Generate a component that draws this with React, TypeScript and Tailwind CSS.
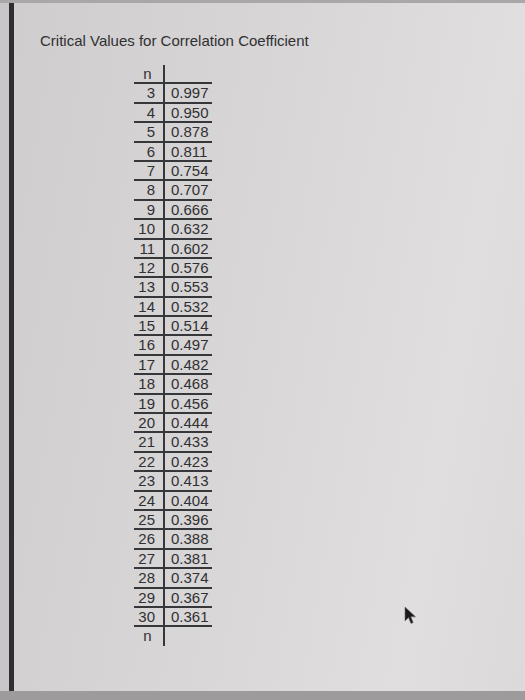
const ROWS: [number, string][] = [
  [3, '0.997'], [4, '0.950'], [5, '0.878'], [6, '0.811'], [7, '0.754'],
  [8, '0.707'], [9, '0.666'], [10, '0.632'], [11, '0.602'], [12, '0.576'],
  [13, '0.553'], [14, '0.532'], [15, '0.514'], [16, '0.497'], [17, '0.482'],
  [18, '0.468'], [19, '0.456'], [20, '0.444'], [21, '0.433'], [22, '0.423'],
  [23, '0.413'], [24, '0.404'], [25, '0.396'], [26, '0.388'], [27, '0.381'],
  [28, '0.374'], [29, '0.367'], [30, '0.361'],
]

function Cursor() {
  return (
    <svg className="absolute left-[404px] top-[606px] blur-[0.6px]" width="14" height="20" viewBox="0 0 14 20">
      <path d="M1 1 L1 15 L4.5 11.5 L7 17.5 L9.2 16.5 L6.8 10.8 L11.5 10.8 Z" fill="#1a1a1c" stroke="#6b6a6c" strokeWidth="0.6" />
    </svg>
  )
}

export default function App() {
  return (
    <div className="relative flex h-[700px] w-[525px] flex-col overflow-hidden bg-[#cfcdce] font-['Liberation_Sans',Arial,sans-serif] text-[#303032]">
      <div className="h-[3px] bg-[#a9a7a8]" />
      <div className="flex flex-1">
        <div className="w-[9px] bg-[#c8c6c7]" />
        <div className="w-[5px] bg-[#2e2e33]" />
        <div className="flex-1 bg-[linear-gradient(100deg,#cfcdce_0%,#d8d6d7_45%,#e0dedf_80%,#dbd9da_100%)] pl-[26px] pt-[29px]">
          <h1 className="text-[15px] leading-[18px]">Critical Values for Correlation Coefficient</h1>

          {/* table */}
          <div className="ml-[94px] mt-[15px] w-[78px] text-[15px] leading-[17.4px]">
            <div className="flex h-[19.4px] border-b-2 border-[#35373a]">
              <div className="w-[31px] border-r-2 border-[#35373a] pr-[2px] text-center">n</div>
              <div className="flex-1" />
            </div>
            {ROWS.map(([n, r]) => (
              <div key={n} className="flex h-[19.4px] border-b-2 border-[#35373a]">
                <div className="w-[31px] border-r-2 border-[#35373a] pr-[8px] text-right">{n}</div>
                <div className="flex-1 pl-[6px]">{r}</div>
              </div>
            ))}
            <div className="flex h-[19px]">
              <div className="w-[31px] border-r-2 border-[#35373a] pr-[2px] text-center">n</div>
              <div className="flex-1" />
            </div>
          </div>
        </div>
      </div>
      <div className="h-[9px] bg-[#9d9b9c]" />
      <Cursor />
    </div>
  )
}
